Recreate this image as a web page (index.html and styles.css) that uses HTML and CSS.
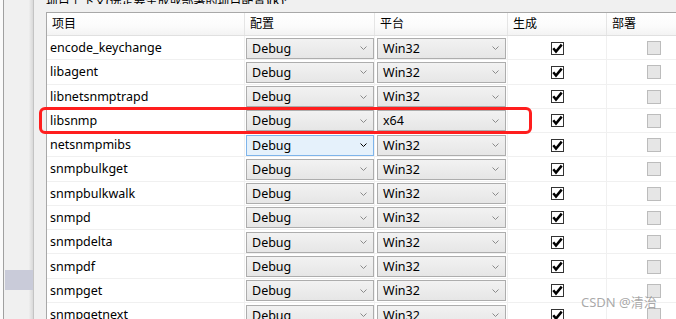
FILE: index.html
```html
<!DOCTYPE html>
<html>
<head>
    <title>配置管理器</title>
    <link rel="stylesheet" href="styles.css">
</head>

<body>

<div class="window">
    <div class="sidebar">
        <div class="tree">
            <div class="tree-sel"></div>
        </div>
    </div>

    <div class="main">
        <div class="caption">项目上下文(选定要生成或部署的项目配置)(K):</div>

        <div class="grid" id="grid">
            <div class="head">
                <div class="hcell">项目</div>
                <div class="hcell">配置</div>
                <div class="hcell">平台</div>
                <div class="hcell">生成</div>
                <div class="hcell">部署</div>
            </div>
        </div>
    </div>
</div>

<div class="highlight"></div>
<div class="watermark">CSDN @清治</div>

<script>
    const projects = [
        ['encode_keychange', 'Win32'],
        ['libagent', 'Win32'],
        ['libnetsnmptrapd', 'Win32'],
        ['libsnmp', 'x64'],
        ['netsnmpmibs', 'Win32'],
        ['snmpbulkget', 'Win32'],
        ['snmpbulkwalk', 'Win32'],
        ['snmpd', 'Win32'],
        ['snmpdelta', 'Win32'],
        ['snmpdf', 'Win32'],
        ['snmpget', 'Win32'],
        ['snmpgetnext', 'Win32']
    ];

    const chevron = '<svg class="chev" width="7" height="4" viewBox="0 0 7 4"><path d="M0.5 0.5 L3.5 3.5 L6.5 0.5" fill="none" stroke="currentColor" stroke-width="1"/></svg>';
    const tick = '<svg width="11" height="11" viewBox="0 0 11 11"><path d="M1.3 5.3 L4 8.6 L9.7 1.6" fill="none" stroke="#000" stroke-width="2.5"/></svg>';

    let grid = document.getElementById('grid');

    projects.forEach(function (p, i) {
        let row = document.createElement('div');
        row.className = 'row';
        let focus = p[0] === 'netsnmpmibs' ? ' focus' : '';
        row.innerHTML =
            '<div class="cell name">' + p[0] + '</div>' +
            '<div class="cell"><div class="combo' + focus + '"><span>Debug</span>' + chevron + '</div></div>' +
            '<div class="cell"><div class="combo"><span>' + p[1] + '</span>' + chevron + '</div></div>' +
            '<div class="cell center"><div class="check">' + tick + '</div></div>' +
            '<div class="cell center"><div class="check off"></div></div>';
        grid.appendChild(row);
    });
</script>

</body>
</html>
```

FILE: styles.css
```css
body {
    margin: 0;
    width: 676px;
    height: 319px;
    overflow: hidden;
    background: #f0f0f0;
    font-family: 'Noto Sans', 'Noto Sans CJK SC', sans-serif;
    font-size: 12px;
    color: #000;
    position: relative;
}

.window {
    display: flex;
    height: 319px;
}

.sidebar {
    width: 34px;
    flex: none;
    padding-left: 3px;
    box-sizing: border-box;
    background: #fafafa;
}

.tree {
    height: 100%;
    border-left: 1px solid #a0a0a0;
    border-right: 1px solid #c4c4c4;
    background: linear-gradient(to right, #f0f0f0 85%, #d9d9d9);
    padding-top: 270px;
    box-sizing: border-box;
}

.tree-sel {
    height: 20px;
    margin-left: 1px;
    background: #c9cbd9;
}

.main {
    flex: 1;
    padding-left: 12px;
    overflow: hidden;
}

.caption {
    height: 8px;
    line-height: 12px;
    margin-top: -5px;
    padding-top: 5px;
    margin-bottom: 4px;
    position: relative;
    top: -4px;
    overflow: hidden;
    white-space: nowrap;
    font-size: 12px;
}

.grid {
    width: 660px;
    background: #fff;
    border-top: 1px solid #a8a8a8;
    border-left: 1px solid #a8a8a8;
}

.head,
.row {
    display: grid;
    grid-template-columns: 198px 130px 133px 99px 96px;
}

.head {
    height: 22px;
    border-bottom: 1px solid #e0e0e0;
    background: linear-gradient(#ffffff, #fbfbfb 60%, #f3f3f3);
}

.hcell {
    padding-left: 5px;
    line-height: 22px;
    border-right: 1px solid #e5e5e5;
}

.row {
    height: 24.27px;
    box-sizing: border-box;
    border-bottom: 1px solid #f0f0f0;
}

.cell {
    border-right: 1px solid #f0f0f0;
    padding: 1px 0 0 0;
    display: flex;
    align-items: center;
    overflow: hidden;
    white-space: nowrap;
}

.cell.name {
    padding-left: 3px;
    padding-top: 0;
    font-size: 12.5px;
}

.cell.center {
    justify-content: center;
}

.combo {
    width: 128px;
    height: 21px;
    box-sizing: border-box;
    margin-left: 1px;
    border: 1px solid #adadad;
    background: linear-gradient(#f2f2f2, #e6e6e6);
    display: flex;
    align-items: center;
    justify-content: space-between;
    padding: 0 6px 0 5px;
    color: #000;
    font-size: 12.5px;
}

.row .cell:nth-child(3) .combo {
    width: 129px;
    margin-left: 2px;
}

.combo .chev {
    color: #8a8a8a;
}

.combo.focus {
    border-color: #7eb4ea;
    background: #e5f1fb;
}

.combo.focus .chev {
    color: #000;
}

.check {
    width: 13px;
    height: 13px;
    box-sizing: border-box;
    border: 1px solid #333;
    background: #fff;
    display: flex;
    align-items: center;
    justify-content: center;
    margin-left: 1px;
}

.check.off {
    width: 14px;
    height: 14px;
    border-color: #bcbcbc;
    background: #e6e6e6;
    margin-left: -1px;
}

.highlight {
    position: absolute;
    left: 39px;
    top: 107px;
    width: 493px;
    height: 27px;
    box-sizing: border-box;
    border: 3px solid #ff1e1e;
    border-radius: 6px;
}

.watermark {
    position: absolute;
    left: 581px;
    top: 292px;
    font-size: 13px;
    color: rgba(140, 140, 140, 0.75);
}
```
